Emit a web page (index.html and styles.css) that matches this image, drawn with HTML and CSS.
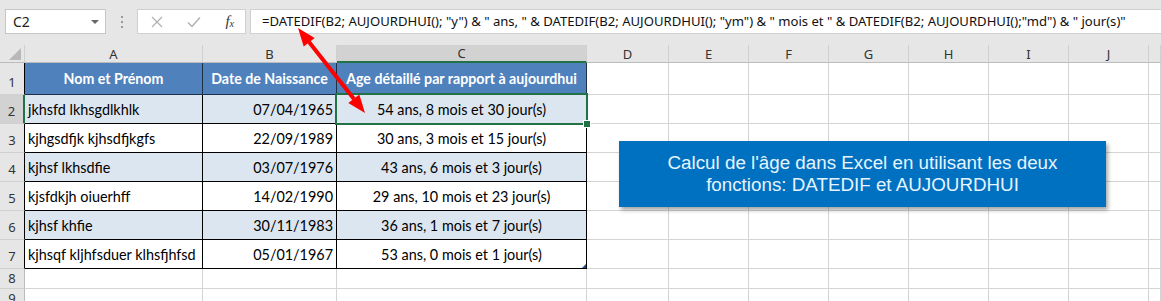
FILE: index.html
```html
<!DOCTYPE html>
<html lang="fr">
<head>
<meta charset="utf-8">
<title>DATEDIF</title>
<link rel="stylesheet" href="styles.css">
</head>
<body>
<div class="app">
  <div class="toolbar">
    <div class="namebox"><span>C2</span><span class="caret"></span></div>
    <div class="dots"><i></i><i></i><i></i></div>
    <div class="fxbox">
      <svg class="ico-x" width="12" height="12" viewBox="0 0 12 12"><path d="M1 1 L11 11 M11 1 L1 11" stroke="#b0b0b0" stroke-width="1.2" fill="none"/></svg>
      <svg class="ico-ok" width="14" height="12" viewBox="0 0 14 12"><path d="M1 6.5 L5 10.5 L13 1.5" stroke="#b0b0b0" stroke-width="1.4" fill="none"/></svg>
      <span class="ico fx">f<sub>x</sub></span>
    </div>
    <div class="formula">=DATEDIF(B2; AUJOURDHUI(); "y") &amp; " ans, " &amp; DATEDIF(B2; AUJOURDHUI(); "ym") &amp; " mois et " &amp; DATEDIF(B2; AUJOURDHUI();"md") &amp; " jour(s)"</div>
  </div>

  <div class="sheet">
    <div class="ch corner"><span class="tri"></span></div>
    <div class="ch">A</div><div class="ch">B</div><div class="ch sel">C</div><div class="ch">D</div><div class="ch">E</div><div class="ch">F</div><div class="ch">G</div><div class="ch">H</div><div class="ch">I</div><div class="ch">J</div><div class="ch"></div>

    <div class="rh tb">1</div>
    <div class="c th">Nom et Prénom</div><div class="c th">Date de Naissance</div><div class="c th">Age détaillé par rapport à aujourdhui</div>
    <div class="c"></div><div class="c"></div><div class="c"></div><div class="c"></div><div class="c"></div><div class="c"></div><div class="c"></div><div class="c"></div>

    <div class="rh tb rsel">2</div>
    <div class="c t band l">jkhsfd lkhsgdlkhlk</div><div class="c t band r">07/04/1965</div><div class="c t band m active">54 ans, 8 mois et 30 jour(s)</div>
    <div class="c"></div><div class="c"></div><div class="c"></div><div class="c"></div><div class="c"></div><div class="c"></div><div class="c"></div><div class="c"></div>

    <div class="rh tb">3</div>
    <div class="c t l">kjhgsdfjk kjhsdfjkgfs</div><div class="c t r">22/09/1989</div><div class="c t m">30 ans, 3 mois et 15 jour(s)</div>
    <div class="c"></div><div class="c"></div><div class="c"></div><div class="c"></div><div class="c"></div><div class="c"></div><div class="c"></div><div class="c"></div>

    <div class="rh tb">4</div>
    <div class="c t band l">kjhsf lkhsdfie</div><div class="c t band r">03/07/1976</div><div class="c t band m">43 ans, 6 mois et 3 jour(s)</div>
    <div class="c"></div><div class="c"></div><div class="c"></div><div class="c"></div><div class="c"></div><div class="c"></div><div class="c"></div><div class="c"></div>

    <div class="rh tb">5</div>
    <div class="c t l">kjsfdkjh oiuerhff</div><div class="c t r">14/02/1990</div><div class="c t m">29 ans, 10 mois et 23 jour(s)</div>
    <div class="c"></div><div class="c"></div><div class="c"></div><div class="c"></div><div class="c"></div><div class="c"></div><div class="c"></div><div class="c"></div>

    <div class="rh tb">6</div>
    <div class="c t band l">kjhsf khfie</div><div class="c t band r">30/11/1983</div><div class="c t band m">36 ans, 1 mois et 7 jour(s)</div>
    <div class="c"></div><div class="c"></div><div class="c"></div><div class="c"></div><div class="c"></div><div class="c"></div><div class="c"></div><div class="c"></div>

    <div class="rh tb">7</div>
    <div class="c t l">kjhsqf kljhfsduer klhsfjhfsd</div><div class="c t r">05/01/1967</div><div class="c t m corner-end">53 ans, 0 mois et 1 jour(s)</div>
    <div class="c"></div><div class="c"></div><div class="c"></div><div class="c"></div><div class="c"></div><div class="c"></div><div class="c"></div><div class="c"></div>

    <div class="rh">8</div>
    <div class="c"></div><div class="c"></div><div class="c"></div><div class="c"></div><div class="c"></div><div class="c"></div><div class="c"></div><div class="c"></div><div class="c"></div><div class="c"></div><div class="c"></div>

    <div class="rh">9</div>
    <div class="c"></div><div class="c"></div><div class="c"></div><div class="c"></div><div class="c"></div><div class="c"></div><div class="c"></div><div class="c"></div><div class="c"></div><div class="c"></div><div class="c"></div>
  </div>

  <div class="callout">
    <span>Calcul de l'âge dans Excel en utilisant les deux</span>
    <span>fonctions: DATEDIF et AUJOURDHUI</span>
  </div>

  <svg class="arrow" width="1161" height="301" viewBox="0 0 1161 301">
    <line x1="309" y1="42" x2="354" y2="99" stroke="#ff0000" stroke-width="4"/>
    <polygon points="298,28 303.7,46.5 314.7,37.9" fill="#ff0000"/>
    <polygon points="365,113 348.3,103.1 359.3,94.5" fill="#ff0000"/>
  </svg>
</div>
</body>
</html>
```

FILE: styles.css
```css
html, body {
  margin: 0;
  padding: 0;
  background: #ffffff;
}
body {
  width: 1161px;
  height: 301px;
  overflow: hidden;
}
.app {
  position: relative;
  width: 1161px;
  height: 301px;
  overflow: hidden;
  font-family: "Lato", "Liberation Sans", sans-serif;
}

/* ---------- formula bar ---------- */
.toolbar {
  height: 45px;
  box-sizing: border-box;
  background: #e6e6e6;
  display: flex;
  align-items: flex-start;
  padding: 9px 0 0 5px;
}
.namebox {
  width: 101px;
  height: 25px;
  box-sizing: border-box;
  background: #fff;
  border: 1px solid #c6c6c6;
  display: flex;
  align-items: center;
  justify-content: space-between;
  padding: 0 6px 0 7px;
  font-family: "Noto Sans", "Open Sans", sans-serif;
  font-size: 14px;
  color: #222;
}
.caret {
  width: 0;
  height: 0;
  border-left: 4px solid transparent;
  border-right: 4px solid transparent;
  border-top: 4px solid #666;
}
.dots {
  width: 31px;
  height: 25px;
  display: flex;
  flex-direction: column;
  align-items: center;
  justify-content: center;
  gap: 3px;
}
.dots i {
  display: block;
  width: 2px;
  height: 2px;
  background: #9a9a9a;
}
.fxbox {
  width: 109px;
  height: 25px;
  box-sizing: border-box;
  background: #fff;
  border: 1px solid #d0d0d0;
  display: flex;
  align-items: center;
  justify-content: space-between;
  padding: 0 11px 0 13px;
  margin-right: 4px;
}
.ico {
  line-height: 1;
}
.ico.fx {
  color: #333;
  font-family: "Liberation Serif", serif;
  font-style: italic;
  font-size: 15px;
}
.ico.fx sub {
  font-size: 10px;
  vertical-align: -1px;
}
.formula {
  flex: 1;
  height: 25px;
  box-sizing: border-box;
  background: #fff;
  border: 1px solid #d0d0d0;
  border-right: none;
  padding: 0 0 0 11px;
  font-family: "Noto Sans", "Open Sans", sans-serif;
  font-size: 13.1px;
  line-height: 23px;
  color: #111;
  white-space: nowrap;
  overflow: hidden;
}

/* ---------- sheet ---------- */
.sheet {
  display: grid;
  grid-template-columns: 25px 178px 134px 250px 82px 80px 80px 80px 80px 80px 80px 12px;
  grid-template-rows: 18px 32px 29px 29px 29px 29px 29px 29px 20px 20px;
}
.sheet > div {
  box-sizing: border-box;
  min-width: 0;
  white-space: nowrap;
  overflow: hidden;
}
.ch {
  background: #e6e6e6;
  border-right: 1px solid #d0d0d0;
  border-bottom: 1px solid #bcbcbc;
  display: flex;
  align-items: center;
  justify-content: center;
  font-family: "Noto Sans", "Open Sans", sans-serif;
  font-size: 13px;
  color: #333;
}
.ch.sel {
  background: #d2d2d2;
  border-bottom: 2px solid #217346;
}
.ch.corner {
  position: relative;
}
.tri {
  position: absolute;
  right: 3px;
  bottom: 2px;
  width: 12px;
  height: 12px;
  background: #b8b8b8;
  clip-path: polygon(100% 0, 100% 100%, 0 100%);
}
.rh {
  background: #e6e6e6;
  border-right: 1px solid #bcbcbc;
  border-bottom: 1px solid #d0d0d0;
  display: flex;
  align-items: flex-end;
  justify-content: center;
  padding-bottom: 1px;
  font-family: "Noto Sans", "Open Sans", sans-serif;
  font-size: 13px;
  color: #333;
}
.rh.tb {
  border-right-color: #000;
  padding-bottom: 3px;
}
.rh.rsel {
  background: #d2d2d2;
  border-right: 2px solid #217346;
}
.c {
  background: #fff;
  border-right: 1px solid #d4d4d4;
  border-bottom: 1px solid #d4d4d4;
  display: flex;
  align-items: flex-end;
  padding: 0 3px 5px 3px;
  font-size: 14.4px;
  color: #000;
}
.c.th {
  background: #4f81bd;
  border-right: 1px solid #1f2f45;
  border-bottom: 1px solid #1f2f45;
  color: #fff;
  font-weight: bold;
  font-size: 14.2px;
  justify-content: center;
  align-items: center;
  padding: 0;
}
.c.t {
  border-right: 1px solid #000;
  border-bottom: 1px solid #000;
}
.c.band {
  background: #dce6f1;
}
.l { justify-content: flex-start; }
.r { justify-content: flex-end; }
.m { justify-content: center; }

.sheet > .active,
.sheet > .corner-end {
  overflow: visible;
  position: relative;
}
.active::after {
  content: "";
  position: absolute;
  left: -2px;
  top: -2px;
  right: -2px;
  bottom: -2px;
  border: 2px solid #217346;
  pointer-events: none;
}
.active::before {
  content: "";
  position: absolute;
  right: -5px;
  bottom: -5px;
  width: 6px;
  height: 6px;
  background: #217346;
  border: 1px solid #fff;
  z-index: 2;
}
.corner-end::after {
  content: "";
  position: absolute;
  right: 0;
  bottom: 0;
  width: 4px;
  height: 4px;
  background: #1f4e9a;
  clip-path: polygon(100% 0, 100% 100%, 0 100%);
}

/* ---------- callout ---------- */
.callout {
  position: absolute;
  left: 619px;
  top: 141px;
  width: 487px;
  height: 66px;
  background: #0070c0;
  box-shadow: 2px 3px 4px rgba(0, 0, 0, 0.35);
  display: flex;
  flex-direction: column;
  align-items: center;
  justify-content: center;
  font-family: "Liberation Sans", Arial, sans-serif;
  font-size: 18.8px;
  line-height: 22px;
  color: #e6f4ff;
}

.arrow {
  position: absolute;
  left: 0;
  top: 0;
  pointer-events: none;
}
```
